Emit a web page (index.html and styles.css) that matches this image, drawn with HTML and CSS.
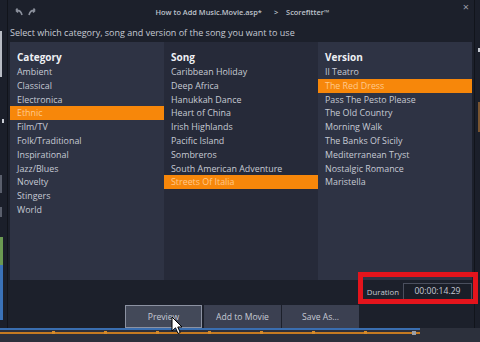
FILE: index.html
```html
<!DOCTYPE html>
<html lang="en">
<head>
  <meta charset="UTF-8">
  <title>Scorefitter</title>
  <link rel="stylesheet" href="styles.css">
</head>
<body>

  <div class="screen">
    <div class="workspace">

      <!-- strip of the editor behind the dialog -->
      <div class="side-left">
        <div class="strip-bar light"></div>
        <div class="strip-dot"></div>
        <div class="strip-bar grey"></div>
        <div class="strip-bar grey short"></div>
        <div class="strip-bar green"></div>
        <div class="strip-bar blue"></div>
      </div>

      <div class="dialog">
        <div class="titlebar">
          <div class="history">
            <svg width="10" height="8" viewBox="0 0 10 8"><path d="M9 7 C8 3 6 2 3 2.5 M3 2.5 L4.5 0.5 M3 2.5 L5 4.5" fill="none" stroke="#8b909c" stroke-width="1.6"/></svg>
            <svg width="10" height="8" viewBox="0 0 10 8"><path d="M1 7 C2 3 4 2 7 2.5 M7 2.5 L5.5 0.5 M7 2.5 L5 4.5" fill="none" stroke="#8b909c" stroke-width="1.6"/></svg>
          </div>
          <div class="title">How to Add Music.Movie.asp*<span class="crumb">&gt;</span>Scorefitter™</div>
          <div class="close">×</div>
        </div>

        <div class="subtitle">Select which category, song and version of the song you want to use</div>

        <div class="panels">
          <div class="panel">
            <div class="panel-head">Category</div>
            <div class="item">Ambient</div>
            <div class="item">Classical</div>
            <div class="item">Electronica</div>
            <div class="item selected">Ethnic</div>
            <div class="item">Film/TV</div>
            <div class="item">Folk/Traditional</div>
            <div class="item">Inspirational</div>
            <div class="item">Jazz/Blues</div>
            <div class="item">Novelty</div>
            <div class="item">Stingers</div>
            <div class="item">World</div>
          </div>
          <div class="panel dark">
            <div class="panel-head">Song</div>
            <div class="item">Caribbean Holiday</div>
            <div class="item">Deep Africa</div>
            <div class="item">Hanukkah Dance</div>
            <div class="item">Heart of China</div>
            <div class="item">Irish Highlands</div>
            <div class="item">Pacific Island</div>
            <div class="item">Sombreros</div>
            <div class="item">South American Adventure</div>
            <div class="item selected">Streets Of Italia</div>
          </div>
          <div class="panel">
            <div class="panel-head">Version</div>
            <div class="item">Il Teatro</div>
            <div class="item selected">The Red Dress</div>
            <div class="item">Pass The Pesto Please</div>
            <div class="item">The Old Country</div>
            <div class="item">Morning Walk</div>
            <div class="item">The Banks Of Sicily</div>
            <div class="item">Mediterranean Tryst</div>
            <div class="item">Nostalgic Romance</div>
            <div class="item">Maristella</div>
          </div>
        </div>

        <div class="footer">
          <div class="duration-row">
            <span class="duration-label">Duration</span>
            <span class="duration-field">00:00:14.29</span>
          </div>
          <div class="buttons">
            <button class="btn focused">Preview</button>
            <button class="btn">Add to Movie</button>
            <button class="btn">Save As...</button>
          </div>
        </div>
      </div>

      <div class="side-right">
        <div class="strip-dot"></div>
        <div class="strip-bar brown"></div>
      </div>
    </div>

    <!-- timeline under the dialog -->
    <div class="timeline">
      <div class="blue-line"></div>
      <div class="track">
        <span class="tick"></span><span class="tick"></span><span class="tick"></span><span class="tick"></span>
        <span class="tick"></span><span class="tick"></span><span class="tick"></span><span class="knob"></span>
      </div>
    </div>
  </div>

  <!-- annotation and pointer drawn over the screenshot -->
  <div class="highlight-box"></div>
  <svg class="cursor" width="12" height="19" viewBox="0 0 12 19">
    <path d="M1 1 L1 15 L4.5 11.8 L7 17.5 L9.2 16.5 L6.8 11 L11 11 Z" fill="#ffffff" stroke="#000000" stroke-width="1"/>
  </svg>

</body>
</html>
```

FILE: styles.css
```css
body {
  margin: 0;
  width: 480px;
  height: 342px;
  overflow: hidden;
  background-color: #2c303c;
  font-family: "Open Sans", "Noto Sans", sans-serif;
  color: #c6cad4;
  position: relative;
}

.screen {
  display: flex;
  flex-direction: column;
  height: 342px;
}

.workspace {
  display: flex;
  height: 328px;
}

/* editor strips around the dialog */
.side-left {
  width: 7px;
  background-color: #1b1f2a;
  border-right: 1px solid #11141b;
  display: flex;
  flex-direction: column;
  padding-top: 31px;
}

.strip-bar {
  width: 2px;
}

.strip-bar.light {
  height: 46px;
  background-color: #b8bcc4;
}

.strip-dot {
  width: 2px;
  height: 4px;
  margin: 42px 0 0 2px;
  background-color: #c8ccd4;
}

.strip-bar.grey {
  height: 18px;
  margin-top: 52px;
  background-color: #5a5f6c;
}

.strip-bar.grey.short {
  height: 10px;
  margin-top: 14px;
}

.strip-bar.green {
  width: 3px;
  height: 28px;
  margin-top: 20px;
  background-color: #6b9a52;
}

.strip-bar.blue {
  width: 3px;
  height: 55px;
  background-color: #3a72b8;
}

.side-right {
  width: 5px;
  background-color: #1b1f2a;
  border-left: 1px solid #11141b;
  display: flex;
  flex-direction: column;
  align-items: flex-end;
}

.side-right .strip-dot {
  margin: 48px 0 0 0;
}

.strip-bar.brown {
  height: 30px;
  margin-top: 50px;
  background-color: #7a5530;
}

/* dialog */
.dialog {
  width: 463px;
  padding: 0 1px 0 2px;
  background-color: #1c202b;
  display: flex;
  flex-direction: column;
}

.titlebar {
  height: 26px;
  display: flex;
  align-items: center;
  position: relative;
}

.history {
  display: flex;
  gap: 5px;
  margin-left: 3px;
  margin-top: -2px;
}

.title {
  position: absolute;
  left: 2px;
  right: 0;
  top: 7px;
  text-align: center;
  font-size: 7.4px;
  font-weight: 600;
  color: #bfc3cc;
  pointer-events: none;
}

.crumb {
  margin: 0 8px 0 12px;
}

.close {
  margin-left: auto;
  margin-right: 4px;
  margin-top: -13px;
  font-size: 11px;
  color: #9a9ea8;
}

.subtitle {
  height: 16px;
  line-height: 14px;
  font-size: 9px;
  color: #c6cad4;
}

.panels {
  display: flex;
  height: 238px;
}

.panel {
  width: 154px;
  padding-top: 7px;
  background-color: #2e3344;
}

.panel.dark {
  background-color: #262a39;
}

.panel-head {
  padding-left: 7px;
  height: 16px;
  line-height: 16px;
  font-size: 10px;
  font-weight: 700;
  color: #eef0f4;
}

.item {
  padding-left: 7px;
  height: 13.8px;
  line-height: 13.8px;
  font-size: 8.9px;
  color: #c6cad4;
  white-space: nowrap;
}

.item.selected {
  background-color: #f7870a;
  color: #ffc98c;
}

.footer {
  flex: 1;
  display: flex;
  flex-direction: column;
}

.duration-row {
  display: flex;
  align-items: center;
  justify-content: flex-end;
  gap: 4px;
  margin-top: 3px;
  padding-right: 1px;
}

.duration-label {
  font-size: 7.8px;
  color: #c6cad4;
}

.duration-field {
  width: 67px;
  height: 15px;
  line-height: 15px;
  text-align: center;
  font-size: 8.6px;
  color: #c6cad4;
  background-color: #1a1e28;
  border: 1px solid #4a4f5e;
}

.buttons {
  display: flex;
  gap: 1px;
  margin-top: auto;
  padding-left: 115px;
}

.btn {
  width: 77px;
  height: 23px;
  padding: 0;
  border: 1px solid #3b4051;
  background-color: #3b4051;
  color: #c6cad4;
  font-family: "Open Sans", "Noto Sans", sans-serif;
  font-size: 8.6px;
}

.btn.focused {
  width: 77px;
  border-color: #8c92a2;
  background-color: #434959;
  margin-right: 1px;
}

/* timeline */
.timeline {
  flex: 1;
  background-color: #2c303c;
}

.blue-line {
  width: 420px;
  height: 2px;
  background-color: #3a6eb0;
}

.track {
  display: flex;
  align-items: center;
  gap: 49px;
  width: 420px;
  height: 4px;
  margin-top: 2px;
  padding-left: 52px;
  border-top: 2px solid #c57a22;
  box-sizing: border-box;
}

.tick {
  width: 3px;
  height: 3px;
  margin-top: -5px;
  background-color: #d68a2a;
}

.knob {
  width: 4px;
  height: 4px;
  margin-top: -5px;
  margin-left: -4px;
  background-color: #9a9ea6;
}

/* overlays */
.highlight-box {
  position: absolute;
  left: 358px;
  top: 272px;
  width: 110px;
  height: 22px;
  border: 5px solid #e3141c;
}

.cursor {
  position: absolute;
  left: 171px;
  top: 316px;
}
```
